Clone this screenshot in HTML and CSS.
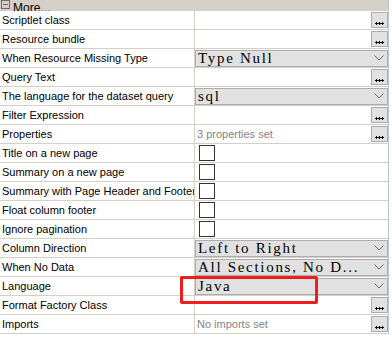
FILE: index.html
```html
<!DOCTYPE html>
<html lang="en">
<head>
    <meta charset="UTF-8">
    <title>Properties</title>
    <link rel="stylesheet" href="styles.css">
</head>
<body>
    <div class="sheet">
        <!-- group header -->
        <div class="group-head">
            <span class="toggle"></span>
            <span class="group-title">More...</span>
        </div>

        <div class="row">
            <div class="label">Scriptlet class</div>
            <div class="value"><span class="dots-btn"><svg width="9" height="3"><rect x="0" y="1" width="9" height="1"/><rect x="1" y="0" width="1" height="3"/><rect x="4" y="0" width="1" height="3"/><rect x="7" y="0" width="1" height="3"/></svg></span></div>
        </div>
        <div class="row">
            <div class="label">Resource bundle</div>
            <div class="value"><span class="dots-btn"><svg width="9" height="3"><rect x="0" y="1" width="9" height="1"/><rect x="1" y="0" width="1" height="3"/><rect x="4" y="0" width="1" height="3"/><rect x="7" y="0" width="1" height="3"/></svg></span></div>
        </div>
        <div class="row">
            <div class="label">When Resource Missing Type</div>
            <div class="value"><div class="combo"><span class="combo-text">Type Null</span><svg class="chevron" width="10" height="6"><path d="M0.5 0.5 L5 5 L9.5 0.5" /></svg></div></div>
        </div>
        <div class="row">
            <div class="label">Query Text</div>
            <div class="value"><span class="dots-btn"><svg width="9" height="3"><rect x="0" y="1" width="9" height="1"/><rect x="1" y="0" width="1" height="3"/><rect x="4" y="0" width="1" height="3"/><rect x="7" y="0" width="1" height="3"/></svg></span></div>
        </div>
        <div class="row">
            <div class="label">The language for the dataset query</div>
            <div class="value"><div class="combo"><span class="combo-text">sql</span><svg class="chevron" width="10" height="6"><path d="M0.5 0.5 L5 5 L9.5 0.5" /></svg></div></div>
        </div>
        <div class="row">
            <div class="label">Filter Expression</div>
            <div class="value"><span class="dots-btn"><svg width="9" height="3"><rect x="0" y="1" width="9" height="1"/><rect x="1" y="0" width="1" height="3"/><rect x="4" y="0" width="1" height="3"/><rect x="7" y="0" width="1" height="3"/></svg></span></div>
        </div>
        <div class="row">
            <div class="label">Properties</div>
            <div class="value"><span class="hint">3 properties set</span><span class="dots-btn"><svg width="9" height="3"><rect x="0" y="1" width="9" height="1"/><rect x="1" y="0" width="1" height="3"/><rect x="4" y="0" width="1" height="3"/><rect x="7" y="0" width="1" height="3"/></svg></span></div>
        </div>
        <div class="row">
            <div class="label">Title on a new page</div>
            <div class="value"><span class="check"></span></div>
        </div>
        <div class="row">
            <div class="label">Summary on a new page</div>
            <div class="value"><span class="check"></span></div>
        </div>
        <div class="row">
            <div class="label">Summary with Page Header and Footer</div>
            <div class="value"><span class="check"></span></div>
        </div>
        <div class="row">
            <div class="label">Float column footer</div>
            <div class="value"><span class="check"></span></div>
        </div>
        <div class="row">
            <div class="label">Ignore pagination</div>
            <div class="value"><span class="check"></span></div>
        </div>
        <div class="row">
            <div class="label">Column Direction</div>
            <div class="value"><div class="combo"><span class="combo-text">Left to Right</span><svg class="chevron" width="10" height="6"><path d="M0.5 0.5 L5 5 L9.5 0.5" /></svg></div></div>
        </div>
        <div class="row">
            <div class="label">When No Data</div>
            <div class="value"><div class="combo"><span class="combo-text">All Sections, No D...</span><svg class="chevron" width="10" height="6"><path d="M0.5 0.5 L5 5 L9.5 0.5" /></svg></div></div>
        </div>
        <div class="row">
            <div class="label">Language</div>
            <div class="value"><div class="combo"><span class="combo-text">Java</span><svg class="chevron" width="10" height="6"><path d="M0.5 0.5 L5 5 L9.5 0.5" /></svg></div></div>
        </div>
        <div class="row">
            <div class="label">Format Factory Class</div>
            <div class="value"><span class="dots-btn"><svg width="9" height="3"><rect x="0" y="1" width="9" height="1"/><rect x="1" y="0" width="1" height="3"/><rect x="4" y="0" width="1" height="3"/><rect x="7" y="0" width="1" height="3"/></svg></span></div>
        </div>
        <div class="row">
            <div class="label">Imports</div>
            <div class="value"><span class="hint">No imports set</span><span class="dots-btn"><svg width="9" height="3"><rect x="0" y="1" width="9" height="1"/><rect x="1" y="0" width="1" height="3"/><rect x="4" y="0" width="1" height="3"/><rect x="7" y="0" width="1" height="3"/></svg></span></div>
        </div>
    </div>

    <!-- red annotation -->
    <div class="mark"></div>
</body>
</html>
```

FILE: styles.css
```css
body {
    margin: 0;
    background-color: #fff;
    font-family: "Liberation Sans", Arial, sans-serif;
    font-size: 11px;
    color: #000;
}

.sheet {
    width: 388px;
    border-right: 1px solid #b9c4d4;
}

/* Заголовок группы */
.group-head {
    height: 11px;
    overflow: hidden;
    background-color: #d4d0c8;
    display: flex;
    align-items: flex-end;
}

.toggle {
    width: 7px;
    height: 7px;
    margin: 0 3px 2px 1px;
    border: 1px solid #6d6d6d;
    background: linear-gradient(#6d6d6d, #6d6d6d) center / 5px 1px no-repeat;
    flex-shrink: 0;
}

.group-title {
    font-size: 12px;
    line-height: 14px;
    margin-bottom: -4px;
}

.row {
    display: flex;
    height: 18px;
    border-bottom: 1px solid #d4d0c8;
}

.label {
    width: 192px;
    padding-left: 2px;
    border-right: 1px solid #d4d0c8;
    line-height: 19px;
    white-space: nowrap;
    overflow: hidden;
}

.value {
    flex: 1;
    display: flex;
    align-items: center;
}

.hint {
    color: #858585;
    padding-left: 2px;
    line-height: 19px;
}

.dots-btn {
    margin-left: auto;
    width: 17px;
    height: 16px;
    box-sizing: border-box;
    border: 1px solid #adadad;
    background-color: #e1e1e1;
    display: flex;
    justify-content: center;
    align-items: flex-end;
    padding-bottom: 1px;
}

.dots-btn svg {
    fill: #000;
    margin-bottom: 1px;
}

.check {
    width: 14px;
    height: 14px;
    margin-left: 4px;
    border: 1px solid #333;
    background-color: #fff;
}

.combo {
    flex: 1;
    height: 17px;
    box-sizing: border-box;
    border: 1px solid #adadad;
    background-color: #e1e1e1;
    display: flex;
    align-items: center;
    padding: 0 3px 0 2px;
}

.combo-text {
    flex: 1;
    font-family: "Liberation Serif", "Times New Roman", serif;
    font-size: 15px;
    letter-spacing: 1.7px;
    line-height: 16px;
    white-space: nowrap;
    overflow: hidden;
}

.chevron {
    fill: none;
    stroke: #6a6a6a;
    stroke-width: 1;
}

/* Красная рамка */
.mark {
    position: absolute;
    left: 180px;
    top: 276px;
    width: 132px;
    height: 22px;
    border: 3px solid #f01d1d;
    border-radius: 2px;
}
```
